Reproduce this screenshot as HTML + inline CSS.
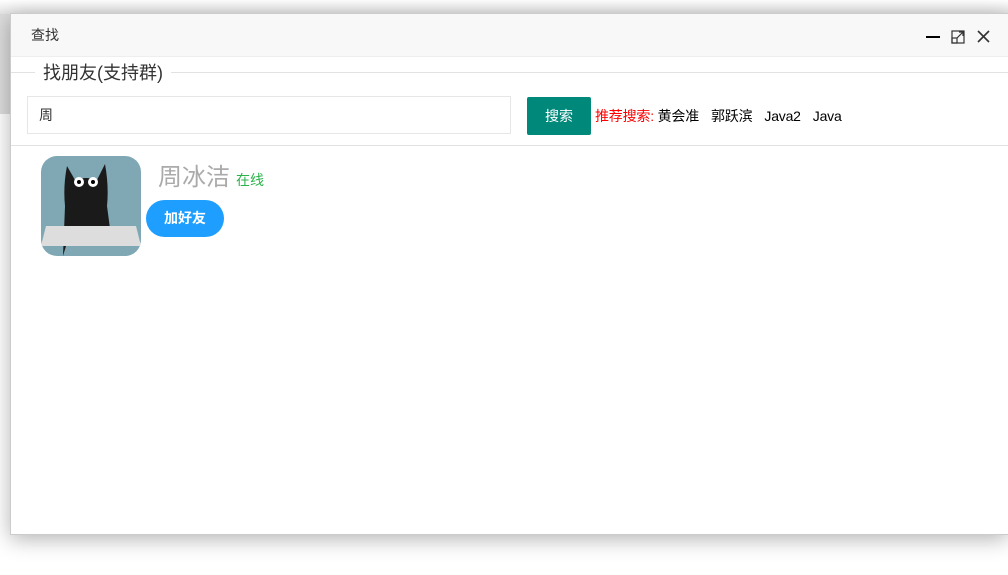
<!DOCTYPE html>
<html><head><meta charset="utf-8"><style>
*{margin:0;padding:0;box-sizing:border-box}
body{width:1008px;height:575px;overflow:hidden;background:#fff;font-family:"Liberation Sans","Noto Sans CJK SC",sans-serif;position:relative}
.bgtop{position:absolute;left:0;top:0;width:1008px;height:14px;background:linear-gradient(#fff,#e4e4e4)}
.bgleft{position:absolute;left:0;top:14px;width:11px;height:100px;background:#ddd}
.dlg{position:absolute;left:10px;top:13px;width:998px;height:522px;background:#fff;box-shadow:0 4px 20px rgba(0,0,0,.3);border:1px solid #ccc;border-right:none}
.title{height:43px;background:#f8f8f8;border-bottom:1px solid #eee;font-size:14px;color:#333;line-height:43px;padding-left:20px}
.fs{position:absolute;left:0;top:58px;width:997px;border-top:1px solid #e2e2e2}
.legend{position:absolute;left:24px;top:47px;background:#fff;padding:0 8px;font-size:18px;color:#333;line-height:24px}
.inp{position:absolute;left:16px;top:82px;width:484px;height:38px;border:1px solid #e6e6e6;font-size:14px;line-height:36px;padding-left:11px;color:#333}
.btn{position:absolute;left:516px;top:83px;width:64px;height:38px;background:#00897b;color:#fff;font-size:14px;line-height:38px;text-align:center;border-radius:2px}
.rec{position:absolute;left:584px;top:92px;font-size:14px;color:#000;letter-spacing:-0.2px}
.rec b{font-weight:normal;color:#f00}
.rec span{margin-right:12px}
.hr{position:absolute;left:0;top:131px;width:997px;border-top:1px solid #e2e2e2}
.av{position:absolute;left:30px;top:142px;width:100px;height:100px;border-radius:16px;background:#7fa8b4;overflow:hidden}
.name{position:absolute;left:147px;top:143px;font-size:24px;color:#aaa}
.on{font-size:14px;color:#2bb24c;margin-left:6px}
.add{position:absolute;left:135px;top:186px;width:78px;height:37px;border-radius:19px;background:#1e9fff;color:#fff;font-size:14px;font-weight:bold;line-height:37px;text-align:center}
</style></head><body>
<div class="bgtop"></div><div class="bgleft"></div>
<div class="dlg">
<div class="title">查找</div>
<svg style="position:absolute;right:14px;top:15px" width="68" height="16" viewBox="0 0 68 16">
<line x1="0" y1="8" x2="14" y2="8" stroke="#000" stroke-width="2"/>
<rect x="26" y="2" width="12" height="12" fill="none" stroke="#333" stroke-width="1.2"/>
<rect x="26" y="9" width="5" height="5" fill="none" stroke="#333" stroke-width="1.2"/>
<path d="M31 9 L37 3 M33 3 H37 V7" fill="none" stroke="#333" stroke-width="1.2"/>
<path d="M52 2 L63 13 M63 2 L52 13" stroke="#333" stroke-width="1.6"/>
</svg>
<div class="fs"></div>
<div class="legend">找朋友(支持群)</div>
<div class="inp">周</div>
<div class="btn">搜索</div>
<div class="rec"><b>推荐搜索:</b> <span>黄会准</span><span>郭跃滨</span><span>Java2</span><span>Java</span></div>
<div class="hr"></div>
<div class="av"><svg width="100" height="100" viewBox="0 0 100 100">
<path d="M22 100 L24 50 Q22 30 26 10 L34 24 Q45 20 56 24 L64 8 Q68 30 66 50 L70 80 L28 80 Z" fill="#1a1a1a"/>
<path d="M5 70 L95 70 L100 90 L0 90 Z" fill="#ddd"/>
<circle cx="38" cy="26" r="5" fill="#fff"/><circle cx="52" cy="26" r="5" fill="#fff"/>
<circle cx="38" cy="26" r="2" fill="#000"/><circle cx="52" cy="26" r="2" fill="#000"/>
</svg></div>
<div class="name">周冰洁<span class="on">在线</span></div>
<div class="add">加好友</div>
</div>
</body></html>
